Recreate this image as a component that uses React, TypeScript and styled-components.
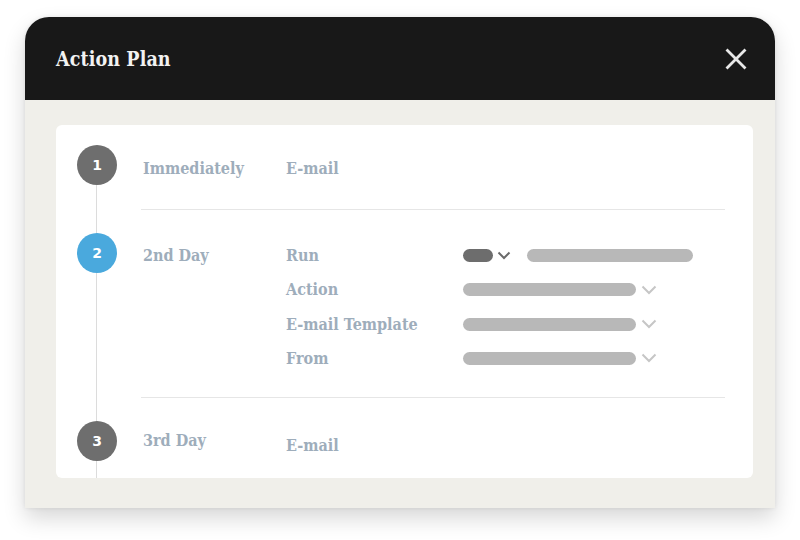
import React from "react";
import styled, { createGlobalStyle } from "styled-components";

const Global = createGlobalStyle`
  html, body { margin: 0; padding: 0; background: #ffffff; }
  body { font-family: "DejaVu Serif", "Liberation Serif", serif; }
`;

const Page = styled.div`
  padding: 17px 25px 0 25px;
  width: 800px;
  height: 540px;
  box-sizing: border-box;
`;

const Modal = styled.div`
  width: 750px;
  height: 491px;
  border-radius: 24px 24px 0 0;
  overflow: hidden;
  display: flex;
  flex-direction: column;
  box-shadow: 0 10px 22px rgba(0, 0, 0, 0.16), 0 0 4px rgba(0, 0, 0, 0.08);
`;

const Header = styled.div`
  height: 83px;
  flex: none;
  box-sizing: border-box;
  background: #181818;
  display: flex;
  align-items: center;
  justify-content: space-between;
  padding: 1px 28px 0 31px;
`;

const Title = styled.h1`
  margin: 0;
  color: #f2f2f2;
  font-family: "DejaVu Serif", serif;
  font-stretch: condensed;
  font-size: 19.5px;
  font-weight: 600;
  letter-spacing: 0.1px;
`;

const CloseButton = styled.button`
  border: 0;
  padding: 0;
  background: transparent;
  width: 22px;
  height: 22px;
  display: flex;
  align-items: center;
  justify-content: center;
  cursor: pointer;
`;

const Body = styled.div`
  flex: 1;
  background: #f0efea;
  padding: 25px 22px 30px 31px;
  display: flex;
`;

const Card = styled.div`
  position: relative;
  flex: 1;
  background: #ffffff;
  border-radius: 6px;
  overflow: hidden;
  &::before {
    content: "";
    position: absolute;
    left: 40px;
    top: 60px;
    bottom: 0;
    width: 1px;
    background: #dcdcdc;
  }
`;

const Step = styled.div`
  display: flex;
  padding-top: 23px;
  &:first-child {
    padding-top: 20px;
  }
`;

const Marker = styled.div`
  width: 85px;
  flex: none;
  padding-left: 21px;
  box-sizing: border-box;
`;

const Circle = styled.div<{ $active?: boolean }>`
  position: relative;
  z-index: 1;
  width: 40px;
  height: 40px;
  border-radius: 50%;
  background: ${(p) => (p.$active ? "#4aa9dd" : "#6e6e6e")};
  color: #ffffff;
  display: flex;
  align-items: center;
  justify-content: center;
  font-family: "DejaVu Sans", sans-serif;
  font-size: 14px;
  font-weight: 700;
`;

const Content = styled.div<{ $pt: number; $pb: number; $last?: boolean }>`
  flex: 1;
  margin-right: 28px;
  padding: ${(p) => p.$pt}px 0 ${(p) => p.$pb}px 2px;
  border-bottom: ${(p) => (p.$last ? "none" : "1px solid #e6e6e6")};
  display: grid;
  grid-template-columns: 143px 177px 1fr;
  grid-auto-rows: 34.33px;
  align-items: center;
`;

const Text = styled.div<{ $shift?: number }>`
  color: #9eadbb;
  font-family: "DejaVu Serif", serif;
  font-stretch: condensed;
  font-size: 16px;
  font-weight: 600;
  white-space: nowrap;
  transform: translateY(${(p) => p.$shift ?? 0}px);
`;

const Controls = styled.div`
  display: flex;
  align-items: center;
`;

const Pill = styled.div<{ $w: number; $dark?: boolean }>`
  width: ${(p) => p.$w}px;
  height: 13px;
  border-radius: 7px;
  background: ${(p) => (p.$dark ? "#6d6d6d" : "#b8b8b8")};
`;

const ChevronWrap = styled.span<{ $gap: number; $after?: number }>`
  display: flex;
  margin-left: ${(p) => p.$gap}px;
  margin-right: ${(p) => p.$after ?? 0}px;
`;

const Chevron = ({ dark }: { dark?: boolean }) =>
  dark ? (
    <svg width="14" height="9" viewBox="0 0 14 9">
      <path d="M1.5 1.5 L7 7 L12.5 1.5" fill="none" stroke="#6a6a6a" strokeWidth="2" />
    </svg>
  ) : (
    <svg width="16" height="10" viewBox="0 0 16 10">
      <path d="M1.5 1.5 L8 8 L14.5 1.5" fill="none" stroke="#c6c6c6" strokeWidth="2" />
    </svg>
  );

const SelectRow = () => (
  <Controls>
    <Pill $w={173} />
    <ChevronWrap $gap={5}>
      <Chevron />
    </ChevronWrap>
  </Controls>
);

export default function App() {
  return (
    <>
      <Global />
      <Page>
        <Modal>
          <Header>
            <Title>Action Plan</Title>
            <CloseButton aria-label="Close">
              <svg width="22" height="22" viewBox="0 0 22 22">
                <path d="M2.5 2.5 L19.5 19.5 M19.5 2.5 L2.5 19.5" stroke="#e8e8e8" strokeWidth="2.8" strokeLinecap="square" />
              </svg>
            </CloseButton>
          </Header>
          <Body>
            <Card>
              <Step>
                <Marker>
                  <Circle>1</Circle>
                </Marker>
                <Content $pt={6} $pb={24}>
                  <Text>Immediately</Text>
                  <Text>E-mail</Text>
                </Content>
              </Step>
              <Step>
                <Marker>
                  <Circle $active>2</Circle>
                </Marker>
                <Content $pt={5} $pb={21}>
                  <Text>2nd Day</Text>
                  <Text>Run</Text>
                  <Controls>
                    <Pill $w={30} $dark />
                    <ChevronWrap $gap={4} $after={16}>
                      <Chevron dark />
                    </ChevronWrap>
                    <Pill $w={166} />
                  </Controls>
                  <span />
                  <Text>Action</Text>
                  <SelectRow />
                  <span />
                  <Text>E-mail Template</Text>
                  <SelectRow />
                  <span />
                  <Text>From</Text>
                  <SelectRow />
                </Content>
              </Step>
              <Step>
                <Marker>
                  <Circle>3</Circle>
                </Marker>
                <Content $pt={3} $pb={0} $last>
                  <Text>3rd Day</Text>
                  <Text $shift={5}>E-mail</Text>
                </Content>
              </Step>
            </Card>
          </Body>
        </Modal>
      </Page>
    </>
  );
}
